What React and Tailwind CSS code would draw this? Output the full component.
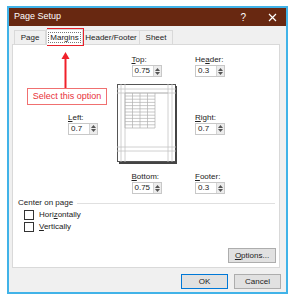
function Spin({ value }) {
  return (
    <div className="flex h-[12px] w-[30px] border border-[#c8c8c8] bg-white">
      <span className="flex-1 pl-[2px] text-[8px] leading-[10px] text-[#222]">{value}</span>
      <div className="flex w-[8px] flex-col items-center justify-center gap-[1px] border-l border-[#d4d4d4] bg-[#ececec]">
        <svg width="5" height="3" viewBox="0 0 5 3">
          <path d="M0 3 L2.5 0 L5 3 Z" fill="#555" />
        </svg>
        <svg width="5" height="3" viewBox="0 0 5 3">
          <path d="M0 0 L2.5 3 L5 0 Z" fill="#555" />
        </svg>
      </div>
    </div>
  );
}

function Field({ label, u, value }) {
  const i = label.indexOf(u);
  return (
    <div className="flex w-[30px] flex-col">
      <span className="h-[10px] text-[8px] leading-[10px] text-[#222]">
        {label.slice(0, i)}
        <span className="underline">{u}</span>
        {label.slice(i + 1)}
      </span>
      <Spin value={value} />
    </div>
  );
}

function Preview() {
  const rows = Array.from({ length: 11 }, (_, k) => 12 + k * 3.2);
  return (
    <svg width="61" height="80" viewBox="0 0 61 80">
      <rect x="0.5" y="0.5" width="58" height="77" fill="#fff" stroke="#555" />
      <path d="M59 2 V79 H2" stroke="#444" strokeWidth="2" fill="none" />
      <g stroke="#c4c4c4" strokeWidth="0.8">
        <path d="M4 0 V78 M8 0 V78 M51 0 V78 M55 0 V78" />
        <path d="M0 5 H59 M0 9 H59 M0 63 H59 M0 67 H59" />
      </g>
      <g stroke="#b0b0b0" strokeWidth="0.7">
        <path d="M8 9 H51" />
        {rows.map((y) => (
          <path key={y} d={`M8 ${y} H38`} />
        ))}
        <path d="M8 9 V44 M15.5 9 V44 M23 9 V44 M30.5 9 V44 M38 9 V44" />
      </g>
    </svg>
  );
}

function Check({ label, u }) {
  const i = label.indexOf(u);
  return (
    <div className="flex items-center gap-[5px]">
      <div className="h-[10px] w-[10px] border border-[#333] bg-white" />
      <span className="text-[8px] leading-[10px] text-[#222]">
        {label.slice(0, i)}
        <span className="underline">{u}</span>
        {label.slice(i + 1)}
      </span>
    </div>
  );
}

export default function App() {
  return (
    <div
      className="relative h-[300px] w-[293px] bg-white pl-[7px] pt-[6px]"
      style={{ fontFamily: '"Liberation Sans", Arial, sans-serif' }}
    >
      <div className="flex h-[288px] w-[281px] flex-col border-2 border-[#41b3e8] bg-[#f0f0f0]">
        <div className="flex h-[18px] items-center bg-[#682811] pl-[5px] pr-[9px] text-white">
          <span className="flex-1 text-[9px]">Page Setup</span>
          <span className="mr-[22px] text-[10px]">?</span>
          <svg width="9" height="9" viewBox="0 0 9 9">
            <path d="M1 1 L8 8 M8 1 L1 8" stroke="#fff" strokeWidth="1.2" />
          </svg>
        </div>

        <div className="flex flex-1 flex-col px-[3px] pt-[3px]">
          <div className="flex h-[15px] items-end pl-[2px] text-[8px] text-[#222]">
            <div className="flex h-[14px] w-[32px] items-center justify-center border border-b-0 border-[#d9d9d9] bg-[#f0f0f0]">
              Page
            </div>
            <div className="relative z-10 -mb-px flex h-[16px] w-[37px] items-center justify-center border border-b-0 border-[#d9d9d9] bg-white">
              <span className="border border-dotted border-[#777] px-[1px] leading-[9px]">Margins</span>
            </div>
            <div className="flex h-[14px] w-[57px] items-center justify-center border border-b-0 border-l-0 border-[#d9d9d9] bg-[#f0f0f0]">
              Header/Footer
            </div>
            <div className="flex h-[14px] w-[33px] items-center justify-center border border-b-0 border-l-0 border-[#d9d9d9] bg-[#f0f0f0]">
              Sheet
            </div>
          </div>

          <div className="flex h-[224px] w-[268px] flex-col border border-[#d9d9d9] bg-white">
            <div className="mt-[10px] grid grid-cols-[30px_59px_30px] gap-x-[19px] pl-[55px]">
              <div />
              <div className="flex justify-center">
                <Field label="Top:" u="T" value="0.75" />
              </div>
              <Field label="Header:" u="a" value="0.3" />

              <div className="flex items-center pt-[6px]">
                <Field label="Left:" u="L" value="0.7" />
              </div>
              <div className="mt-[7px]">
                <Preview />
              </div>
              <div className="flex items-center pt-[6px]">
                <Field label="Right:" u="R" value="0.7" />
              </div>

              <div />
              <div className="mt-[8px] flex justify-center">
                <Field label="Bottom:" u="B" value="0.75" />
              </div>
              <div className="mt-[8px]">
                <Field label="Footer:" u="F" value="0.3" />
              </div>
            </div>

            <div className="mt-[3px] flex items-center gap-[4px] pl-[5px] pr-[4px]">
              <span className="text-[8px] text-[#222]">Center on page</span>
              <div className="h-px flex-1 bg-[#e0e0e0]" />
            </div>
            <div className="mt-[1px] flex flex-col gap-[2px] pl-[11px]">
              <Check label="Horizontally" u="z" />
              <Check label="Vertically" u="V" />
            </div>

            <div className="mt-auto mb-[4px] mr-[3px] flex justify-end">
              <div className="flex h-[15px] w-[48px] items-center justify-center border border-[#adadad] bg-[#e1e1e1] text-[8px] text-[#222]">
                <span className="underline">O</span>ptions...
              </div>
            </div>
          </div>

          <div className="mt-[6px] flex justify-end gap-[6px] pr-[2px]">
            <div className="flex h-[15px] w-[47px] items-center justify-center border border-[#0078d7] bg-[#e1e1e1] text-[8px] text-[#222]">
              OK
            </div>
            <div className="flex h-[15px] w-[47px] items-center justify-center border border-[#adadad] bg-[#e1e1e1] text-[8px] text-[#222]">
              Cancel
            </div>
          </div>
        </div>
      </div>

      <div className="absolute left-[47px] top-[28px] h-[18px] w-[37px] border-2 border-[#e8212b]" />
      <svg className="absolute left-[61px] top-[52px]" width="9" height="37" viewBox="0 0 9 37">
        <path d="M4.5 6 V37" stroke="#f0202a" strokeWidth="2" />
        <path d="M0.5 7 L4.5 0 L8.5 7 Z" fill="#f0202a" />
      </svg>
      <div className="absolute left-[27px] top-[88px] flex h-[17px] w-[80px] items-center justify-center border border-[#f07070] bg-white text-[9px] text-[#e8323a]">
        Select this option
      </div>
    </div>
  );
}
